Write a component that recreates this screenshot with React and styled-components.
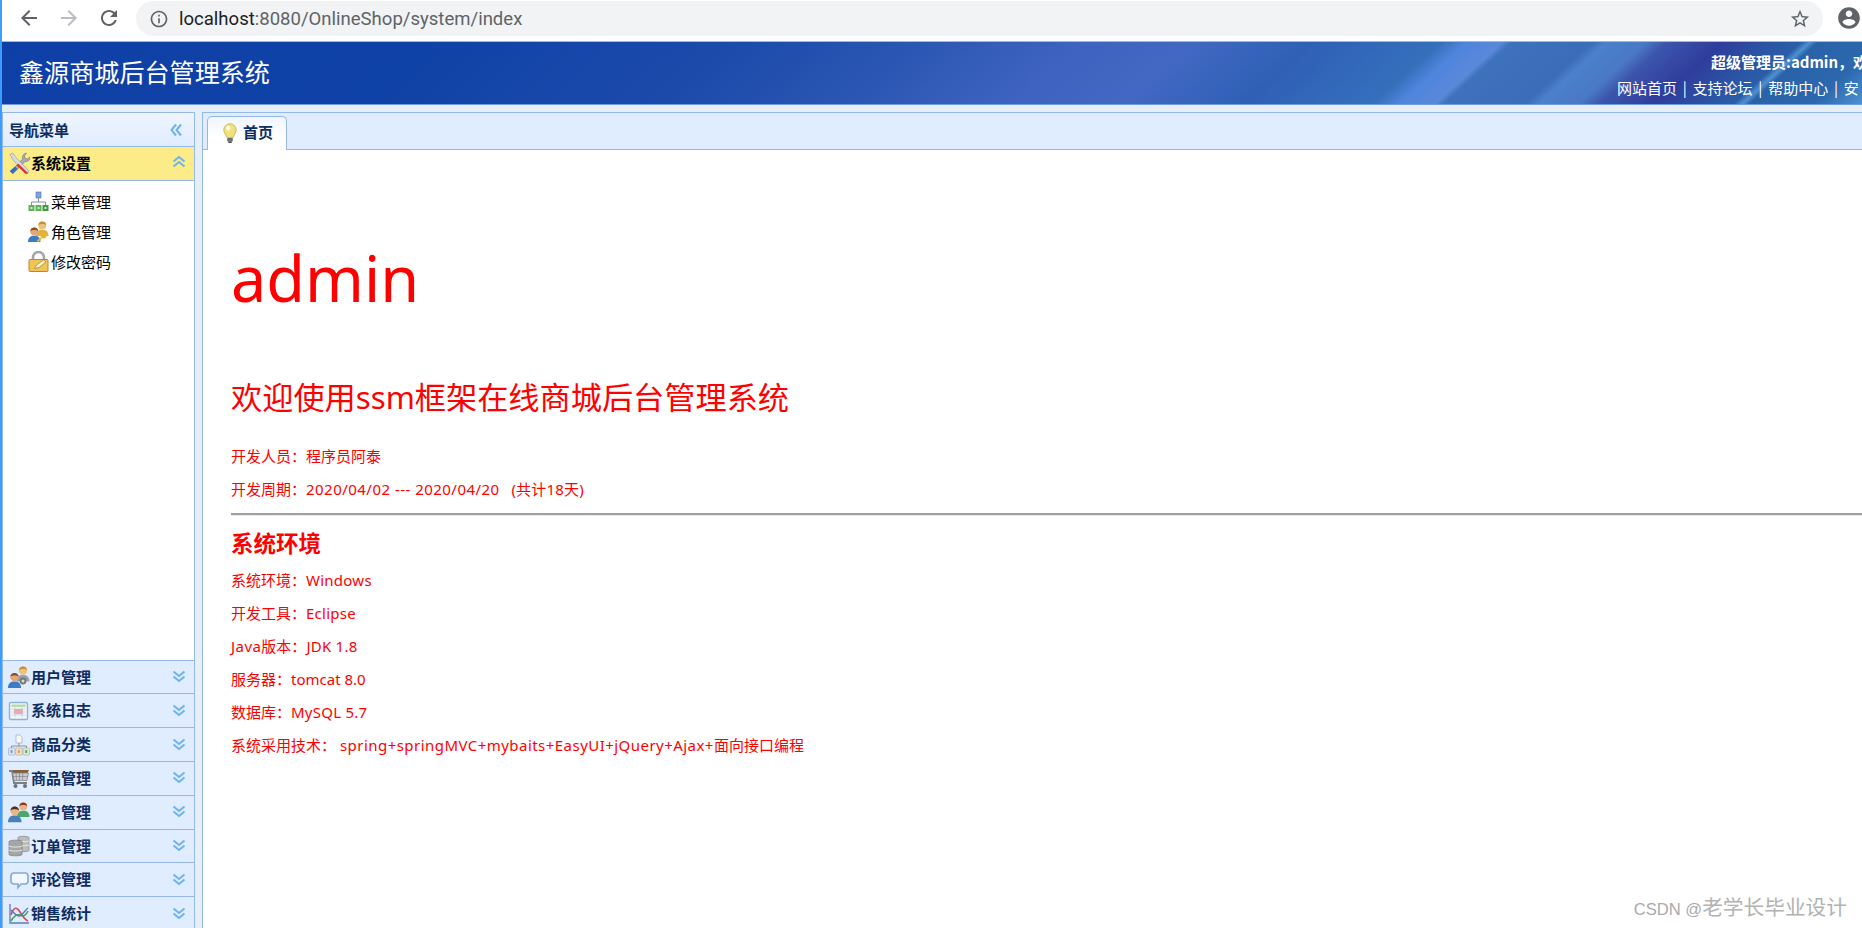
import React from "react";
import styled, { createGlobalStyle } from "styled-components";

const FONT = `"Noto Sans", "Noto Sans CJK SC", sans-serif`;
const CJK = `"Noto Sans CJK SC", "Noto Sans", sans-serif`;

const Global = createGlobalStyle`
  html, body { margin: 0; padding: 0; height: 100%; overflow: hidden; background: #fff; }
  #root { height: 100%; }
  * { box-sizing: border-box; }
`;

const at = (x) => `${Math.round(x * 0.673)}px`;
const bannerStops = [
  ["#0e3fa6", 0], ["#0f42a6", 420], ["#1b4aab", 720], ["#2a55b2", 900], ["#3e63c0", 1080], ["#4268c2", 1190],
  ["#2f60b6", 1310], ["#3570bc", 1440], ["#4f85dc", 1465], ["#5a88da", 1500], ["#3f72bc", 1510],
  ["#3a6cb8", 1590], ["#4a80cc", 1605], ["#4a78c4", 1645], ["#3c55ac", 1665], ["#2f3c9c", 1720], ["#2b54a4", 1770],
  ["#2a5ea8", 1800], ["#4f90d0", 1808], ["#2a62a8", 1816], ["#2c68ae", 1880], ["#4a90d0", 1925],
];
const bannerGradient = `linear-gradient(137.7deg, ${bannerStops.map(([c, x]) => `${c} ${at(x)}`).join(", ")})`;

const Page = styled.div`
  height: 928px;
  width: 1862px;
  display: flex;
  flex-direction: column;
  overflow: hidden;
  border-left: 2px solid #3b9eff;
  position: relative;
  background: #e6eef8;
  font-family: ${FONT};
`;

const Toolbar = styled.div`
  flex: none;
  height: 42px;
  margin-left: -2px;
  padding-left: 15px;
  display: flex;
  align-items: flex-start;
  background: #fff;
  border-bottom: 1px solid #b4b6b8;
  border-left: 2px solid #3b9eff;
`;

const NavButton = styled.span`
  flex: none;
  width: 24px;
  height: 24px;
  margin: 6px 16px 0 0;
  display: flex;
  fill: ${(p) => (p.$off ? "#b9bcc0" : "#5f6368")};
`;

const Address = styled.div`
  flex: none;
  width: 1687px;
  height: 35px;
  margin: 1px 0 0 -1px;
  padding: 0 12px 0 13px;
  border-radius: 18px;
  background: #f1f3f4;
  display: flex;
  align-items: center;
  font-family: "Roboto", sans-serif;
  font-size: 18.55px;
`;

const InfoIcon = styled.svg`
  flex: none;
  width: 20px;
  height: 20px;
  fill: #5f6368;
  margin-right: 10px;
`;

const Host = styled.span`
  color: #202124;
`;

const UrlRest = styled.span`
  color: #5f6368;
`;

const StarIcon = styled.svg`
  flex: none;
  width: 22px;
  height: 22px;
  margin-left: auto;
  fill: #5f6368;
`;

const ProfileIcon = styled.svg`
  flex: none;
  width: 26px;
  height: 26px;
  margin: 5px 0 0 13px;
  fill: #5f6368;
`;

const Banner = styled.header`
  flex: none;
  height: 63px;
  display: flex;
  align-items: flex-start;
  color: #fff;
  background: ${bannerGradient};
  border-bottom: 1px solid #6f9fe0;
  font-family: ${CJK};
`;

const BannerTitle = styled.div`
  margin: 11px 0 0 17px;
  font-size: 25.1px;
  line-height: 36px;
`;

const BannerRight = styled.div`
  flex: none;
  width: 245px;
  margin: 8px 0 0 auto;
  font-size: 15px;
`;

const WelcomeLine = styled.div`
  margin-left: 94px;
  line-height: 24px;
  font-weight: 700;
  white-space: nowrap;
`;

const LinksLine = styled.div`
  margin-top: 2px;
  line-height: 24px;
  white-space: nowrap;
  word-spacing: 2.4px;
`;

const Main = styled.div`
  flex: 1;
  min-height: 0;
  display: flex;
  gap: 7px;
  padding-top: 7px;
`;

const Sidebar = styled.aside`
  flex: none;
  width: 193px;
  margin-bottom: -3px;
  display: flex;
  flex-direction: column;
  background: #fff;
  border: 1px solid #95b8e7;
  border-bottom: none;
  font-family: ${CJK};
  font-size: 15px;
`;

const SideTitle = styled.div`
  flex: none;
  height: 34px;
  padding: 0 10px 0 6px;
  display: flex;
  align-items: center;
  justify-content: space-between;
  font-weight: 700;
  color: #0e2d5f;
  background: linear-gradient(#eff5ff, #e0ecff);
  border-bottom: 1px solid #95b8e7;
`;

const Section = styled.div`
  flex: none;
  height: 33.8px;
  padding: 0 7px 2px 5px;
  display: flex;
  align-items: center;
  font-weight: 700;
  color: ${(p) => (p.$open ? "#000" : "#0e2d5f")};
  background: ${(p) => (p.$open ? "#fbec88" : "#e0ecff")};
  border-bottom: 1px solid #95b8e7;
`;

const SectionIcon = styled.svg`
  flex: none;
  width: 22px;
  height: 22px;
  margin: 2px 1px 0 0;
`;

const Chevrons = styled.svg`
  flex: none;
  width: 16px;
  height: 16px;
  margin-left: auto;
  fill: none;
  stroke: #6db4ee;
  stroke-width: 2;
`;

const MenuBody = styled.div`
  flex: 1;
  min-height: 0;
  padding: 6px 0 0 25px;
  border-bottom: 1px solid #95b8e7;
  background: #fff;
`;

const MenuItem = styled.div`
  height: 30px;
  display: flex;
  align-items: center;
  color: #000;
`;

const ItemIcon = styled.svg`
  flex: none;
  width: 21px;
  height: 21px;
  margin-right: 2px;
`;

const Workspace = styled.section`
  flex: 1;
  min-width: 0;
  display: flex;
  flex-direction: column;
  background: #fff;
  border-left: 1px solid #95b8e7;
`;

const TabStrip = styled.div`
  flex: none;
  height: 38px;
  padding: 4px 0 0 4px;
  display: flex;
  align-items: flex-end;
  background: #e0ecff;
  border-top: 1px solid #95b8e7;
  border-bottom: 1px solid #95b8e7;
`;

const Tab = styled.div`
  width: 80px;
  height: 34px;
  margin-bottom: -1px;
  padding: 0 0 5px 14px;
  display: flex;
  align-items: center;
  background: linear-gradient(#eff5ff, #fff 60%);
  border: 1px solid #95b8e7;
  border-bottom: none;
  border-radius: 5px 5px 0 0;
  font-family: ${CJK};
  font-size: 15px;
  font-weight: 700;
  color: #0e2d5f;
`;

const BulbIcon = styled.svg`
  flex: none;
  width: 16px;
  height: 23px;
  margin: 5px 5px 0 0;
`;

const Content = styled.main`
  flex: 1;
  padding: 0 0 0 28px;
  color: #f00;
  font-family: ${FONT};
  overflow: hidden;
`;

const HugeName = styled.h1`
  margin: 84px 0 0;
  font-size: 63px;
  line-height: 88px;
  font-weight: 400;
`;

const Welcome = styled.h2`
  margin: 51px 0 0;
  font-size: 31.2px;
  line-height: 48px;
  font-weight: 400;
`;

const Line = styled.p`
  margin: 0;
  font-size: 15px;
  line-height: 33px;
  white-space: pre;
`;

const FirstLine = styled(Line)`
  margin-top: 19px;
`;

const Latin = styled.span`
  letter-spacing: ${(p) => p.$track || "0.25px"};
`;

const Rule = styled.hr`
  width: 100%;
  height: 2px;
  margin: 7px 0 0;
  border: none;
  background: #a0a0a0;
  box-shadow: 0 1px 0 #e8e8e8;
`;

const Subhead = styled.h3`
  margin: 13px 0 4px;
  font-size: 22.5px;
  line-height: 32px;
  font-weight: 700;
`;

const Watermark = styled.div`
  position: absolute;
  right: 15px;
  bottom: 5px;
  color: #b2b2b2;
  font-family: "Noto Sans CJK SC", sans-serif;
  font-size: 20.7px;
  line-height: 26px;
`;

const WatermarkLatin = styled.span`
  font-family: "Liberation Sans", sans-serif;
  font-size: 16.6px;
  color: #aaaaaa;
`;

const ChevronsIcon = ({ dir }) => {
  const paths = {
    down: ["M2.5 3.5 8 8l5.5-4.5", "M2.5 8.5 8 13l5.5-4.5"],
    up: ["M2.5 7.5 8 3l5.5 4.5", "M2.5 12.5 8 8l5.5 4.5"],
    left: ["M8 2.5 3.5 8 8 13.5", "M13 2.5 8.5 8 13 13.5"],
  }[dir];
  return (
    <Chevrons viewBox="0 0 16 16">
      {paths.map((d) => (
        <path key={d} d={d} />
      ))}
    </Chevrons>
  );
};

const Person = ({ x, y, s = 1, skin = "#e8b070", hair = "#a06a30", suit = "#4a86c8" }) => (
  <g transform={`translate(${x} ${y}) scale(${s})`}>
    <path d="M0 12c0-3.6 2-5 5-5s5 1.4 5 5z" fill={suit} />
    <circle cx="5" cy="3.6" r="3.2" fill={skin} />
    <path d="M1.8 3.4C2 1 3.6.3 5 .3s3 .7 3.2 3.1C7 2 3 2 1.8 3.4z" fill={hair} />
  </g>
);

const toolsArt = (
  <>
    <path d="M18.5 1a4.5 4.5 0 0 0-3.8 6L2.5 19.5 4.8 21.8 17.2 9.5a4.5 4.5 0 0 0 5-5l-2.6 2.5-2.5-.8-.6-2.5z" fill="#a8adb4" stroke="#6d7379" strokeWidth=".6" />
    <path d="M2 2.500 4.500 1 8 5.500 20.500 18.500l-.6 3.200-3.200-1L5 8z" fill="#d8dce0" stroke="#7a7f86" strokeWidth=".5" />
    <path d="M10.500 11.800 20 21l-2.200 1-9.500-8.800z" fill="#d93a2b" />
    <path d="M1.800 19 7 14.500l2.500 2.500-5 4.800z" fill="#2f6fc4" />
  </>
);
const orgArt = (
  <>
    <rect x="8" y="1" width="5" height="6" fill="#7fa4e0" stroke="#4a70b8" strokeWidth=".6" />
    <path d="M10.500 7v4M3.500 14v-3h14v3" stroke="#8a8f95" fill="none" />
    <rect x="0.500" y="14" width="6" height="6" fill="#63b05a" />
    <rect x="7.500" y="14" width="6" height="6" fill="#63b05a" />
    <rect x="14.500" y="14" width="6" height="6" fill="#3f9a3f" />
    <rect x="2.500" y="16" width="2" height="2" fill="#cfeac8" />
    <rect x="9.500" y="16" width="2" height="2" fill="#cfeac8" />
    <rect x="16.500" y="16" width="2" height="2" fill="#cfeac8" />
  </>
);
const roleArt = (
  <>
    <Person x="8" y="0" s="1.25" skin="#efc27a" hair="#c89030" suit="#e4b040" />
    <Person x="0" y="6" s="1.25" skin="#e4a878" hair="#8a4f28" suit="#3a7cc8" />
    <circle cx="15.500" cy="14.500" r="3" fill="#e8b430" />
    <path d="M13 17 9.500 20.500" stroke="#e8b430" strokeWidth="2" />
  </>
);
const lockArt = (
  <>
    <path d="M5 11V6.500a5.500 5.500 0 0 1 11 0V11" fill="none" stroke="#a2a6aa" strokeWidth="2.6" />
    <rect x="1" y="8.500" width="19" height="12" rx="1" fill="#f2c456" stroke="#b58a32" />
    <path d="M6.500 17.500l2-3.500 7-5 2.500 2-7 5.500z" fill="#fff3c8" stroke="#9a7a30" strokeWidth=".7" />
  </>
);
const usersGearArt = (
  <>
    <Person x="8.500" y="0" s="1.3" skin="#efc27a" hair="#c89030" suit="#9aa0a4" />
    <Person x="0" y="6.500" s="1.3" skin="#e4a878" hair="#8a4f28" suit="#3a7cc8" />
    <circle cx="15" cy="15" r="3.400" fill="#6f7a78" />
    <circle cx="15" cy="15" r="1.500" fill="#d7dde0" />
  </>
);
const tableArt = (
  <>
    <rect x="1.500" y="2.500" width="18" height="17" rx="1.5" fill="#f2f6fb" stroke="#8fb0d8" strokeWidth="1.4" />
    <rect x="3.500" y="4.500" width="14" height="2.500" fill="#b7dca8" />
    <rect x="6" y="9" width="9" height="5" fill="#f3a3a8" />
    <path d="M3.500 9h14M3.500 12h14M3.500 15h14M7 7.500v10M14 7.500v10" stroke="#b9c6d6" strokeWidth=".6" />
  </>
);
const treeDocArt = (
  <>
    <path d="M8 1h4l2 2v6H8z" fill="#f4f6f8" stroke="#a8adb2" strokeWidth=".7" />
    <path d="M11 9v3M3.500 14v-2h15v2" stroke="#8a8f95" fill="none" />
    <rect x="0.500" y="14" width="6.500" height="7" rx=".8" fill="#d8e8f8" stroke="#9fa6ad" strokeWidth=".6" />
    <rect x="7.700" y="14" width="6.500" height="7" rx=".8" fill="#f8e0c8" stroke="#9fa6ad" strokeWidth=".6" />
    <rect x="15" y="14" width="6.500" height="7" rx=".8" fill="#d8ecd8" stroke="#9fa6ad" strokeWidth=".6" />
    <rect x="2.500" y="16" width="2" height="3" fill="#6aa0dc" />
    <rect x="9.800" y="16" width="2" height="3" fill="#e89a48" />
    <rect x="17.200" y="16" width="2" height="3" fill="#5ab05a" />
  </>
);
const cartArt = (
  <>
    <path d="M4 3h17l-1.500 3H5z" fill="#8a5f32" />
    <path d="M1 4h3l2 12h13" fill="none" stroke="#7a7f84" strokeWidth="1.8" />
    <path d="M4.500 6h16l-1.500 7.500H6z" fill="#c9cccf" stroke="#7a7f84" strokeWidth=".7" />
    <path d="M8 6l.6 7M11.500 6v7M15 6l-.6 7M5 9.500h15" stroke="#7a7f84" strokeWidth=".6" />
    <circle cx="7.500" cy="19" r="2" fill="#6d7175" />
    <circle cx="17" cy="19" r="2" fill="#6d7175" />
  </>
);
const customersArt = (
  <>
    <Person x="9" y="1" s="1.25" skin="#e8b488" hair="#8a3f20" suit="#4aa86a" />
    <Person x="0" y="5" s="1.35" skin="#e8b488" hair="#4a3220" suit="#4a80b8" />
  </>
);
const dbArt = (
  <>
    <path d="M10 2.500c0-1.600 11-1.600 11 0v13c0 1.600-11 1.600-11 0z" fill="#b9bcb9" stroke="#7c7f7c" strokeWidth=".6" />
    <path d="M1 6.500c0-1.800 13-1.800 13 0v13c0 1.800-13 1.800-13 0z" fill="#a4a7a4" stroke="#6f726f" strokeWidth=".6" />
    <path d="M1 11c2 1.400 11 1.400 13 0M1 15c2 1.400 11 1.400 13 0M14.500 6.500c2.500 .4 5 .2 6.500-.5M14.500 10.500c2.500 .4 5 .2 6.500-.5" stroke="#e8eae8" fill="none" strokeWidth="1" />
  </>
);
const bubbleArt = (
  <path d="M6 4h11a3 3 0 0 1 3 3v5a3 3 0 0 1-3 3h-4l-3 3.500V15H6a3 3 0 0 1-3-3V7a3 3 0 0 1 3-3z" fill="#f2f7fd" stroke="#7faad8" strokeWidth="1.6" />
);
const chartArt = (
  <>
    <path d="M2 1v19h19" fill="none" stroke="#5a7fb8" strokeWidth="1.3" />
    <path d="M3 12C6 3 9 4 12 9s5 8 8 9" fill="none" stroke="#e0484a" strokeWidth="1.6" />
    <path d="M3 18c3-5 6-7 9-6s5 2 8-4" fill="none" stroke="#4aa04a" strokeWidth="1.6" />
    <path d="M3 7c3 3 5 6 8 6s6-6 9-8" fill="none" stroke="#4878d0" strokeWidth="1.4" />
  </>
);

const sections = [
  { name: "用户管理", art: usersGearArt },
  { name: "系统日志", art: tableArt },
  { name: "商品分类", art: treeDocArt },
  { name: "商品管理", art: cartArt },
  { name: "客户管理", art: customersArt },
  { name: "订单管理", art: dbArt },
  { name: "评论管理", art: bubbleArt },
  { name: "销售统计", art: chartArt },
];

const items = [
  { name: "菜单管理", art: orgArt },
  { name: "角色管理", art: roleArt },
  { name: "修改密码", art: lockArt },
];

export default function App() {
  return (
    <Page>
      <Global />
      <Toolbar>
        <NavButton>
          <svg viewBox="0 0 24 24" width="24" height="24">
            <path d="M20 11H7.83l5.59-5.59L12 4l-8 8 8 8 1.41-1.41L7.83 13H20v-2z" />
          </svg>
        </NavButton>
        <NavButton $off>
          <svg viewBox="0 0 24 24" width="24" height="24">
            <path d="M12 4l-1.41 1.41L16.17 11H4v2h12.17l-5.58 5.59L12 20l8-8z" />
          </svg>
        </NavButton>
        <NavButton>
          <svg viewBox="0 0 24 24" width="24" height="24">
            <path d="M17.65 6.35C16.2 4.9 14.21 4 12 4c-4.42 0-7.99 3.58-7.99 8s3.57 8 7.99 8c3.73 0 6.84-2.55 7.73-6h-2.08c-.82 2.33-3.04 4-5.65 4-3.31 0-6-2.69-6-6s2.69-6 6-6c1.66 0 3.14.69 4.22 1.78L13 11h7V4l-2.35 2.35z" />
          </svg>
        </NavButton>
        <Address>
          <InfoIcon viewBox="0 0 24 24">
            <path d="M11 7h2v2h-2zm0 4h2v6h-2zm1-9C6.48 2 2 6.48 2 12s4.48 10 10 10 10-4.48 10-10S17.52 2 12 2zm0 18c-4.41 0-8-3.59-8-8s3.59-8 8-8 8 3.59 8 8-3.59 8-8 8z" />
          </InfoIcon>
          <Host>localhost</Host>
          <UrlRest>:8080/OnlineShop/system/index</UrlRest>
          <StarIcon viewBox="0 0 24 24">
            <path d="M22 9.24l-7.19-.62L12 2 9.19 8.63 2 9.24l5.46 4.73L5.82 21 12 17.27 18.18 21l-1.63-7.03L22 9.24zM12 15.4l-3.76 2.27 1-4.28-3.32-2.88 4.38-.38L12 6.1l1.71 4.04 4.38.38-3.32 2.88 1 4.28L12 15.4z" />
          </StarIcon>
        </Address>
        <ProfileIcon viewBox="0 0 24 24">
          <path d="M12 2C6.48 2 2 6.48 2 12s4.48 10 10 10 10-4.48 10-10S17.52 2 12 2zm0 3c1.66 0 3 1.34 3 3s-1.34 3-3 3-3-1.34-3-3 1.34-3 3-3zm0 14.2c-2.5 0-4.71-1.28-6-3.22.03-1.99 4-3.08 6-3.08 1.99 0 5.97 1.09 6 3.08-1.29 1.94-3.5 3.22-6 3.22z" />
        </ProfileIcon>
      </Toolbar>

      <Banner>
        <BannerTitle>鑫源商城后台管理系统</BannerTitle>
        <BannerRight>
          <WelcomeLine>超级管理员:admin，欢</WelcomeLine>
          <LinksLine>网站首页 | 支持论坛 | 帮助中心 | 安</LinksLine>
        </BannerRight>
      </Banner>

      <Main>
        <Sidebar>
          <SideTitle>
            导航菜单
            <ChevronsIcon dir="left" />
          </SideTitle>
          <Section $open>
            <SectionIcon viewBox="0 0 22 22">{toolsArt}</SectionIcon>
            系统设置
            <ChevronsIcon dir="up" />
          </Section>
          <MenuBody>
            {items.map((it) => (
              <MenuItem key={it.name}>
                <ItemIcon viewBox="0 0 21 21">{it.art}</ItemIcon>
                {it.name}
              </MenuItem>
            ))}
          </MenuBody>
          {sections.map((s) => (
            <Section key={s.name}>
              <SectionIcon viewBox="0 0 22 22">{s.art}</SectionIcon>
              {s.name}
              <ChevronsIcon dir="down" />
            </Section>
          ))}
        </Sidebar>

        <Workspace>
          <TabStrip>
            <Tab>
              <BulbIcon viewBox="0 0 18 24">
                <path d="M9 1a7 7 0 0 0-7 7c0 3.5 2.6 5 3.4 8.5h7.2C13.4 13 16 11.5 16 8a7 7 0 0 0-7-7z" fill="#efe27a" stroke="#b9a93e" strokeWidth=".8" />
                <ellipse cx="7" cy="6" rx="2.4" ry="3" fill="#fffbe0" />
                <rect x="5.8" y="17" width="6.4" height="4" rx="1" fill="#6d7076" />
                <rect x="7" y="21" width="4" height="1.6" fill="#3d3f44" />
              </BulbIcon>
              首页
            </Tab>
          </TabStrip>
          <Content>
            <HugeName>admin</HugeName>
            <Welcome>欢迎使用ssm框架在线商城后台管理系统</Welcome>
            <FirstLine>开发人员：程序员阿泰</FirstLine>
            <Line>开发周期：<Latin $track="0.47px">2020/04/02 --- 2020/04/20</Latin>   <Latin $track="0.2px">(共计18天)</Latin></Line>
            <Rule />
            <Subhead>系统环境</Subhead>
            <Line>系统环境：<Latin>Windows</Latin></Line>
            <Line>开发工具：<Latin>Eclipse</Latin></Line>
            <Line><Latin $track="0.45px">Java</Latin>版本：<Latin>JDK 1.8</Latin></Line>
            <Line>服务器：tomcat 8.0</Line>
            <Line>数据库：<Latin>MySQL 5.7</Latin></Line>
            <Line>系统采用技术： <Latin $track="0.46px">spring+springMVC+mybaits+EasyUI+jQuery+Ajax+</Latin>面向接口编程</Line>
          </Content>
        </Workspace>
      </Main>

      <Watermark>
        <WatermarkLatin>CSDN @</WatermarkLatin>老学长毕业设计
      </Watermark>
    </Page>
  );
}
